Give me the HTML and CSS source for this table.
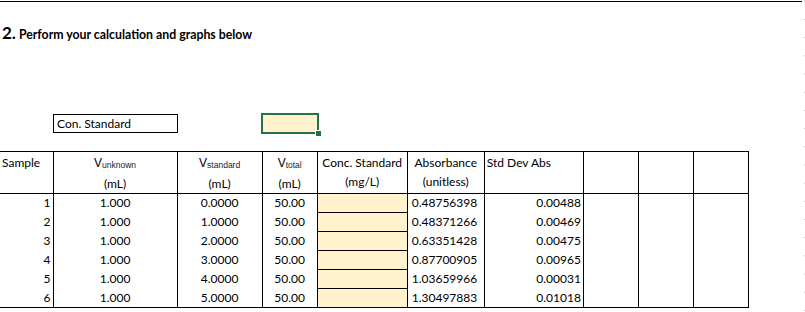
FILE: index.html
```html
<!DOCTYPE html>
<html>
<head>
<meta charset="utf-8">
<link rel="stylesheet" href="styles.css">
</head>
<body>
<div class="sheet">
  <div class="topline"></div>
  <h2 class="heading"><span class="num">2.</span> Perform your calculation and graphs below</h2>
  <div class="inputs">
    <div class="label-box">Con. Standard</div>
    <div class="active-cell"><span class="handle"></span></div>
  </div>
  <table class="grid">
    <colgroup>
      <col class="c-sample"><col class="c-vu"><col class="c-vs"><col class="c-vt"><col class="c-conc"><col class="c-abs"><col class="c-sd"><col class="c-e"><col class="c-e"><col class="c-e">
    </colgroup>
    <thead>
      <tr>
        <th class="left">Sample</th>
        <th><span class="v">V<sub>unknown</sub></span><br>(mL)</th>
        <th><span class="v">V<sub>standard</sub></span><br>(mL)</th>
        <th><span class="v">V<sub>total</sub></span><br>(mL)</th>
        <th>Conc. Standard<br>(mg/L)</th>
        <th>Absorbance<br>(unitless)</th>
        <th class="left">Std Dev Abs</th>
        <th></th><th></th><th></th>
      </tr>
    </thead>
    <tbody>
      <tr><td class="r">1</td><td class="c">1.000</td><td class="c">0.0000</td><td class="c">50.00</td><td class="fill"></td><td class="l">0.48756398</td><td class="r">0.00488</td><td></td><td></td><td></td></tr>
      <tr><td class="r">2</td><td class="c">1.000</td><td class="c">1.0000</td><td class="c">50.00</td><td class="fill"></td><td class="l">0.48371266</td><td class="r">0.00469</td><td></td><td></td><td></td></tr>
      <tr><td class="r">3</td><td class="c">1.000</td><td class="c">2.0000</td><td class="c">50.00</td><td class="fill"></td><td class="l">0.63351428</td><td class="r">0.00475</td><td></td><td></td><td></td></tr>
      <tr><td class="r">4</td><td class="c">1.000</td><td class="c">3.0000</td><td class="c">50.00</td><td class="fill"></td><td class="l">0.87700905</td><td class="r">0.00965</td><td></td><td></td><td></td></tr>
      <tr><td class="r">5</td><td class="c">1.000</td><td class="c">4.0000</td><td class="c">50.00</td><td class="fill"></td><td class="l">1.03659966</td><td class="r">0.00031</td><td></td><td></td><td></td></tr>
      <tr><td class="r">6</td><td class="c">1.000</td><td class="c">5.0000</td><td class="c">50.00</td><td class="fill"></td><td class="l">1.30497883</td><td class="r">0.01018</td><td></td><td></td><td></td></tr>
    </tbody>
  </table>
</div>
</body>
</html>
```
FILE: styles.css
```css
html, body {
  margin: 0;
  padding: 0;
  background: #fff;
}
.sheet {
  width: 805px;
  height: 312px;
  overflow: hidden;
  font-family: "Lato", "Liberation Sans", sans-serif;
  font-size: 12px;
  color: #000;
  background-image: linear-gradient(to bottom, #c4c4c4 0 1px, transparent 1px);
  background-size: 1px 18.2px;
  background-repeat: repeat-y;
  background-position: right 0 top 19px;
}
.topline {
  margin-top: 1px;
  width: 802px;
  border-top: 1px solid #000;
}
.heading {
  margin: 22px 0 0 2px;
  height: 18px;
  line-height: 18px;
  font-size: 12.3px;
  font-weight: bold;
  white-space: nowrap;
}
.heading .num {
  font-size: 17px;
}
.inputs {
  margin-top: 72px;
  display: flex;
  align-items: flex-start;
  height: 37px;
}
.label-box {
  margin-left: 53px;
  width: 120px;
  height: 17px;
  line-height: 17px;
  padding-left: 3px;
  border: 1px solid #000;
}
.active-cell {
  position: relative;
  margin-left: 83px;
  margin-top: -1px;
  width: 54px;
  height: 17px;
  border: 2px solid #217346;
  background: #fff2cc;
}
.handle {
  position: absolute;
  right: -4px;
  bottom: -4px;
  width: 5px;
  height: 5px;
  background: #217346;
  border: 1px solid #fff;
  border-width: 1px 0 0 1px;
}
.grid {
  border-collapse: collapse;
  table-layout: fixed;
  width: 749px;
}
.c-sample { width: 53px; }
.c-vu { width: 124px; }
.c-vs { width: 85px; }
.c-vt { width: 55px; }
.c-conc { width: 90px; }
.c-abs { width: 77px; }
.c-sd { width: 99px; }
.c-e { width: 55px; }
.grid th, .grid td {
  border-left: 1px solid #000;
  border-right: 1px solid #000;
  padding: 0 2px;
  white-space: nowrap;
  overflow: hidden;
}
.grid th:first-child, .grid td:first-child {
  border-left: none;
}
.grid thead th {
  height: 38px;
  border-top: 1px solid #000;
  border-bottom: 1px solid #000;
  font-weight: normal;
  vertical-align: top;
  text-align: center;
  line-height: 19px;
  padding-top: 1px;
}
.grid thead th.left {
  text-align: left;
}
.grid .v {
  font-family: "Liberation Sans", sans-serif;
  font-size: 12px;
}
.grid sub {
  font-size: 8.5px;
  vertical-align: baseline;
  position: relative;
  top: 1px;
  color: #222;
}
.grid tbody td {
  height: 17px;
  line-height: 17px;
  padding-top: 0;
  padding-bottom: 1px;
}
.grid tbody tr:last-child td {
  border-bottom: 1px solid #000;
}
.grid td.r { text-align: right; }
.grid td.c { text-align: center; }
.grid td.l { text-align: left; padding-left: 4px; }
.grid td.fill {
  background: #fff2cc;
  border-top: 1px solid #000;
  border-bottom: 1px solid #000;
}
```
